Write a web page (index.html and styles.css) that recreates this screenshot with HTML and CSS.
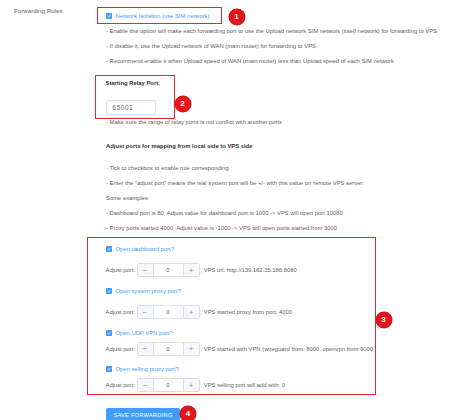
FILE: index.html
```html
<!DOCTYPE html>
<html>
<head>
<meta charset="utf-8">
<link rel="stylesheet" href="styles.css">
</head>
<body>
<div class="form">
  <div class="form-label">Forwarding Rules</div>
  <div class="form-content">
    <div class="mark mark-1">
      <label class="check">
        <span class="check-box"><svg viewBox="0 0 6 6" width="6" height="6"><rect width="6" height="6" rx="0.8" fill="#409eff"/><path d="M1.5 3.1 L2.6 4.1 L4.6 1.9" fill="none" stroke="#fff" stroke-width="0.8"/></svg></span>
        <span class="check-text">Network Isolation (use SIM network)</span>
      </label>
      <span class="badge badge-1">1</span>
    </div>
    <p class="desc">- Enable this option will make each forwarding port to use the Upload network SIM network (itself network) for forwarding to VPS.</p>
    <p class="desc">- If disable it, use the Upload network of WAN (main router) for forwarding to VPS.</p>
    <p class="desc">- Recommend enable it when Upload speed of WAN (main router) less than Upload speed of each SIM network</p>

    <div class="mark mark-2">
      <div class="heading">Starting Relay Port:</div>
      <div class="port-input">65001</div>
      <span class="badge badge-2">2</span>
    </div>
    <p class="desc desc-tight">- Make sure the range of relay ports is not conflict with another ports</p>

    <div class="heading heading-adjust">Adjust ports for mapping from local side to VPS side</div>
    <div class="notes">
      <p class="desc">- Tick to checkbox to enable rule corresponding.</p>
      <p class="desc">- Enter the "adjust port" means the real system port will be +/- with this value on remote VPS server.</p>
      <p class="desc">Some examples:</p>
      <p class="desc">- Dashboard port is 80. Adjust value for dashboard port is 1000 -&gt; VPS will open port 10080</p>
      <p class="desc">- Proxy ports started 4000. Adjust value is -1000 -&gt; VPS will open ports started from 3000</p>
    </div>

    <div class="mark mark-3">
      <div class="rule">
        <label class="check">
          <span class="check-box"><svg viewBox="0 0 6 6" width="6" height="6"><rect width="6" height="6" rx="0.8" fill="#409eff"/><path d="M1.5 3.1 L2.6 4.1 L4.6 1.9" fill="none" stroke="#fff" stroke-width="0.8"/></svg></span>
          <span class="check-text">Open dashboard port?</span>
        </label>
        <div class="adjust">
          <span class="adjust-label">Adjust port:</span>
          <div class="stepper"><span class="step step-minus">−</span><span class="step-value">0</span><span class="step step-plus">+</span></div>
          <span class="adjust-note">, VPS url: http://139.162.35.186:8080</span>
        </div>
      </div>
      <div class="rule">
        <label class="check">
          <span class="check-box"><svg viewBox="0 0 6 6" width="6" height="6"><rect width="6" height="6" rx="0.8" fill="#409eff"/><path d="M1.5 3.1 L2.6 4.1 L4.6 1.9" fill="none" stroke="#fff" stroke-width="0.8"/></svg></span>
          <span class="check-text">Open system proxy port?</span>
        </label>
        <div class="adjust">
          <span class="adjust-label">Adjust port:</span>
          <div class="stepper"><span class="step step-minus">−</span><span class="step-value">0</span><span class="step step-plus">+</span></div>
          <span class="adjust-note">, VPS started proxy from port: 4000</span>
        </div>
      </div>
      <div class="rule rule-compact">
        <label class="check">
          <span class="check-box"><svg viewBox="0 0 6 6" width="6" height="6"><rect width="6" height="6" rx="0.8" fill="#409eff"/><path d="M1.5 3.1 L2.6 4.1 L4.6 1.9" fill="none" stroke="#fff" stroke-width="0.8"/></svg></span>
          <span class="check-text">Open UDP VPN port?</span>
        </label>
        <div class="adjust">
          <span class="adjust-label">Adjust port:</span>
          <div class="stepper"><span class="step step-minus">−</span><span class="step-value">0</span><span class="step step-plus">+</span></div>
          <span class="adjust-note">, VPS started with VPN (wireguard from: 8000, openvpn from:9000</span>
        </div>
      </div>
      <div class="rule rule-compact">
        <label class="check">
          <span class="check-box"><svg viewBox="0 0 6 6" width="6" height="6"><rect width="6" height="6" rx="0.8" fill="#409eff"/><path d="M1.5 3.1 L2.6 4.1 L4.6 1.9" fill="none" stroke="#fff" stroke-width="0.8"/></svg></span>
          <span class="check-text">Open selling proxy port?</span>
        </label>
        <div class="adjust">
          <span class="adjust-label">Adjust port:</span>
          <div class="stepper"><span class="step step-minus">−</span><span class="step-value">0</span><span class="step step-plus">+</span></div>
          <span class="adjust-note">, VPS selling port will add with: 0</span>
        </div>
      </div>
      <span class="badge badge-3">3</span>
    </div>

    <div class="actions">
      <button class="btn" type="button">SAVE FORWARDING</button>
      <span class="badge badge-4">4</span>
    </div>
  </div>
</div>
</body>
</html>
```

FILE: styles.css
```css
html, body {
  margin: 0;
  padding: 0;
  background: #ffffff;
}

body {
  font-family: "Liberation Sans", Arial, sans-serif;
  font-size: 5.85px;
  color: #606266;
  overflow: hidden;
}

.form {
  display: flex;
  align-items: flex-start;
}

.form-label {
  width: 106px;
  box-sizing: border-box;
  padding-left: 14px;
  padding-top: 4px;
  line-height: 14px;
  font-size: 6.2px;
  color: #606266;
  flex-shrink: 0;
}

.form-content {
  flex: 1;
  padding-top: 7px;
  min-width: 0;
}

.desc {
  margin: 0;
  line-height: 15px;
  white-space: nowrap;
}

.desc-tight {
  line-height: 7px;
}

.heading {
  font-weight: bold;
  line-height: 10px;
  color: #303133;
}

.heading-adjust {
  margin-top: 15px;
}

.notes {
  margin-top: 9.5px;
}

/* annotation boxes */
.mark {
  position: relative;
  border: 1.5px solid #e8262b;
  box-sizing: border-box;
}

.mark-1 {
  margin-left: -9px;
  width: 125px;
  height: 17px;
  padding-left: 7.5px;
  display: flex;
  align-items: center;
}

.mark-2 {
  margin-left: -11px;
  margin-top: 6px;
  width: 80px;
  height: 44px;
  padding: 2px 0 0 9.5px;
}

.mark-3 {
  margin-left: -19px;
  margin-top: 1.5px;
  width: 289px;
  height: 158px;
  padding: 5.5px 0 0 17.5px;
}

.badge {
  position: absolute;
  width: 16px;
  height: 16px;
  border-radius: 50%;
  background: #e3151b;
  color: #ffffff;
  font-weight: bold;
  font-size: 8px;
  line-height: 16px;
  text-align: center;
  box-shadow: 0 0 0 0.5px #b5121a;
}

.badge-1 { left: 130.5px; top: 0.5px; }
.badge-2 { left: 78.5px; top: 19.5px; }
.badge-3 { left: 287.5px; top: 73.5px; }
.badge-4 { left: 74px; top: -2px; }

/* checkbox */
.check {
  display: flex;
  align-items: center;
  height: 10px;
  gap: 4px;
  color: #409eff;
  white-space: nowrap;
}

.check-box {
  display: flex;
  width: 6px;
  height: 6px;
}

.check-box svg {
  display: block;
}

.port-input {
  margin-top: 11.5px;
  width: 50px;
  height: 15px;
  border: 1px solid #dcdfe6;
  border-radius: 2px;
  box-sizing: border-box;
  padding-left: 6px;
  line-height: 13px;
  font-size: 6.4px;
  letter-spacing: 0.6px;
  color: #606266;
}

/* rules */
.rule + .rule {
  margin-top: 8.5px;
}

.adjust {
  display: flex;
  align-items: center;
  height: 14px;
  margin-top: 9.5px;
  white-space: nowrap;
  color: #606266;
}

.rule-compact .adjust {
  margin-top: 4px;
}

.adjust-label {
  width: 31px;
}

.stepper {
  display: flex;
  width: 63px;
  height: 14px;
  border: 1px solid #dcdfe6;
  border-radius: 2px;
  box-sizing: border-box;
  background: #ffffff;
}

.step {
  width: 15px;
  background: #f5f7fa;
  color: #909399;
  display: flex;
  align-items: center;
  justify-content: center;
  font-size: 8px;
}

.step-minus {
  border-right: 1px solid #dcdfe6;
}

.step-plus {
  border-left: 1px solid #dcdfe6;
}

.step-value {
  flex: 1;
  text-align: center;
  line-height: 12px;
  color: #606266;
}

.adjust-note {
  margin-left: 1px;
}

/* actions */
.actions {
  position: relative;
  margin-top: 13px;
}

.btn {
  display: block;
  width: 74px;
  height: 14px;
  padding: 0;
  border: none;
  border-radius: 2px;
  background: #409eff;
  color: #ffffff;
  font-family: "Liberation Sans", Arial, sans-serif;
  font-size: 5.6px;
  letter-spacing: 0.3px;
  line-height: 14px;
  text-align: center;
}
```
